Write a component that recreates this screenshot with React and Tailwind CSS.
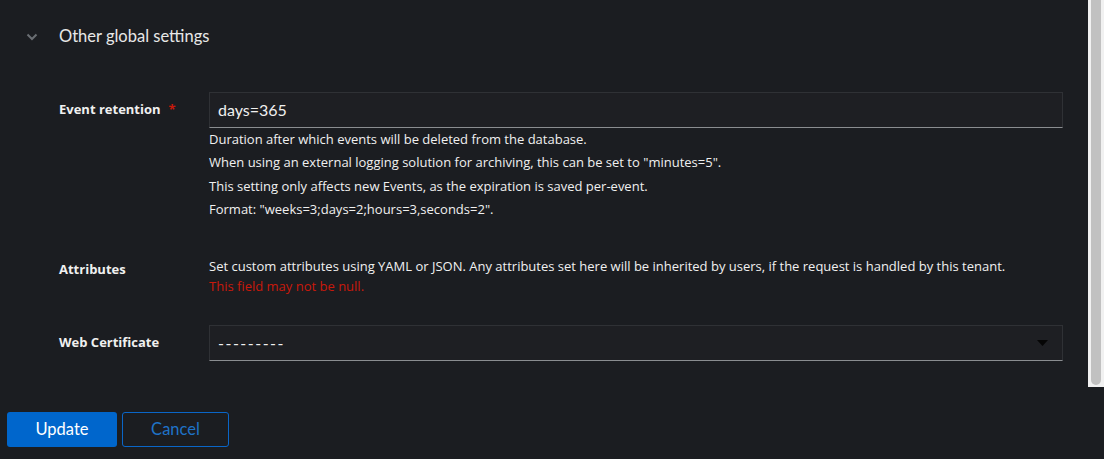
import React from 'react'

const FONT = { fontFamily: '"Open Sans", Lato, sans-serif' }
const TITLE = { fontFamily: 'Lato, "Open Sans", sans-serif' }

function Chevron() {
  return (
    <svg width="12" height="8" viewBox="0 0 12 8" className="text-[#6a6e73]">
      <polyline points="1.5,1.5 6,6 10.5,1.5" fill="none" stroke="currentColor" strokeWidth="2" />
    </svg>
  )
}

function Caret() {
  return (
    <svg width="11" height="6" viewBox="0 0 11 6">
      <polygon points="0,0 11,0 5.5,6" fill="#050505" />
    </svg>
  )
}

export default function App() {
  const helpers = [
    'Duration after which events will be deleted from the database.',
    'When using an external logging solution for archiving, this can be set to "minutes=5".',
    'This setting only affects new Events, as the expiration is saved per-event.',
    'Format: "weeks=3;days=2;hours=3,seconds=2".',
  ]

  return (
    <div className="h-[459px] w-full overflow-hidden bg-[#1b1d21] text-[#f0f0f0] flex flex-col" style={FONT}>
      {/* scroll area */}
      <div className="h-[387px] flex">
        <div className="flex-1 min-w-0 pt-[24px] pr-[25px]">
          {/* section header */}
          <div className="flex items-center h-6">
            <div className="w-[59px] flex justify-end pr-[21px] pt-[1px]">
              <Chevron />
            </div>
            <span className="text-[16.5px] text-[#e8e8e8]" style={TITLE}>Other global settings</span>
          </div>

          {/* event retention */}
          <div className="mt-[44px] flex pl-[59px]">
            <div className="w-[150px] h-9 flex items-center text-[13px] font-bold">
              Event retention
              <span className="text-[#c9190b] ml-[8px]">*</span>
            </div>
            <div className="flex-1">
              <div className="h-9 bg-[#1e1f23] border border-[#2f3135] border-b-[#8a8d90] flex items-center px-2 text-[16px]" style={TITLE}>
                days=365
              </div>
              <div className="text-[13px]">
                {helpers.map((h) => (
                  <p key={h} className="leading-[23.4px]">{h}</p>
                ))}
              </div>
            </div>
          </div>

          {/* attributes */}
          <div className="mt-[34px] flex pl-[59px]">
            <div className="w-[150px] pt-[3px] leading-5 text-[13px] font-bold">Attributes</div>
            <div className="flex-1 text-[13px] leading-5">
              <p>Set custom attributes using YAML or JSON. Any attributes set here will be inherited by users, if the request is handled by this tenant.</p>
              <p className="text-[#c9190b]">This field may not be null.</p>
            </div>
          </div>

          {/* web certificate */}
          <div className="mt-[29px] flex pl-[59px]">
            <div className="w-[150px] h-9 flex items-center text-[13px] font-bold">Web Certificate</div>
            <div className="flex-1 h-9 bg-[#1e1f23] border border-[#2f3135] border-b-[#8a8d90] flex items-center justify-between pl-2 pr-[14px] text-[16px]" style={TITLE}>
              <span className="tracking-[1.5px]">---------</span>
              <Caret />
            </div>
          </div>
        </div>

        {/* scrollbar */}
        <div className="w-[16px] bg-[#f1f1f1] flex justify-center pb-[2px]">
          <div className="w-[10px] h-full bg-[#c1c1c1] rounded-b-full" />
        </div>
      </div>

      {/* footer */}
      <div className="mt-[25px] flex gap-[5px] pl-[7px]" style={TITLE}>
        <button className="w-[110px] h-[35px] bg-[#0066cc] rounded-[3px] text-white text-[16.5px]">Update</button>
        <button className="w-[107px] h-[35px] border border-[#0a66c8] rounded-[3px] text-[#1f73c8] text-[16.5px]">Cancel</button>
      </div>
    </div>
  )
}
